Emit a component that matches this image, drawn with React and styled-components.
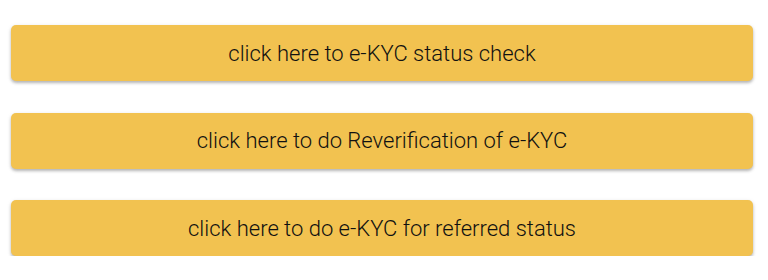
import styled, { createGlobalStyle } from "styled-components"

const GlobalStyle = createGlobalStyle`
  body {
    margin: 0;
    background: #ffffff;
    font-family: Roboto, "Liberation Sans", sans-serif;
  }
`

const ButtonList = styled.div`
  display: flex;
  flex-direction: column;
  gap: 31.5px;
  padding: 25px 15px 0 11px;
`

const ActionButton = styled.button`
  display: flex;
  align-items: center;
  justify-content: center;
  height: 56px;
  width: 100%;
  border: none;
  border-radius: 5px;
  background: #f2c250;
  color: #111111;
  font-family: Roboto, "Liberation Sans", sans-serif;
  font-size: 22px;
  font-weight: 300;
  padding: 0 16px;
  box-shadow: 0 2px 3px rgba(0, 0, 0, 0.25), 0 1px 5px rgba(0, 0, 0, 0.08);
  cursor: pointer;
`

const actions = [
  "click here to e-KYC status check",
  "click here to do Reverification of e-KYC",
  "click here to do e-KYC for referred status",
]

const App = () => {
  return (
    <>
      <GlobalStyle />
      <ButtonList>
        {actions.map((label) => (
          <ActionButton key={label}>{label}</ActionButton>
        ))}
      </ButtonList>
    </>
  )
}

export default App
